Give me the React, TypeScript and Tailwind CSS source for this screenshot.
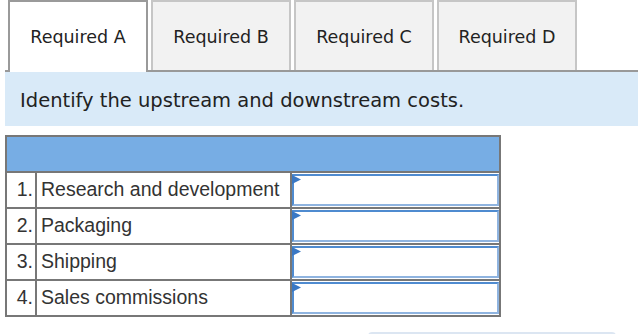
const tabs = ["Required A", "Required B", "Required C", "Required D"];

const rows = [
  "Research and development",
  "Packaging",
  "Shipping",
  "Sales commissions",
];

export default function App() {
  return (
    <div className="w-[638px] h-[334px] overflow-hidden bg-white text-[#333]">
      {/* Tabs */}
      <div className="pl-[5px]">
        <div className="flex gap-[3px] pl-[3px] border-b-2 border-[#999] h-[72px]">
          {tabs.map((t, i) =>
            i === 0 ? (
              <div
                key={t}
                className="w-[140px] h-[72px] border-2 border-b-0 border-[#9a9a9a] bg-white flex items-center justify-center font-['DejaVu_Sans',sans-serif] text-[17.5px] text-[#222] pt-[1px]"
              >
                {t}
              </div>
            ) : (
              <div
                key={t}
                className="w-[140px] h-[70px] border-2 border-b-0 border-[#c6c6c6] bg-[#f2f2f2] flex items-center justify-center font-['DejaVu_Sans',sans-serif] text-[17.5px] text-[#222] pt-[2px]"
              >
                {t}
              </div>
            )
          )}
        </div>

        {/* Instruction */}
        <div className="h-[54px] bg-[#d9eaf8] flex items-center pl-[15px] pt-[4px] font-['DejaVu_Sans',sans-serif] text-[19.5px] text-[#222]">
          Identify the upstream and downstream costs.
        </div>

        {/* Table */}
        <div className="mt-[9px] w-[496px] border-2 border-[#777] bg-[#777] flex flex-col gap-[2px]">
          <div className="h-[34px] bg-[#77ade4]" />
          {rows.map((r, i) => (
            <div key={r} className="flex gap-[2px] h-[34px]">
              <div className="w-[28px] bg-white flex items-center justify-end pr-[2px] font-['Liberation_Sans',sans-serif] text-[19.5px]">
                {i + 1}.
              </div>
              <div className="w-[253px] bg-white flex items-center pl-[4px] font-['Liberation_Sans',sans-serif] text-[19.5px]">
                {r}
              </div>
              <div className="flex-1 bg-white pt-[1px] pb-[1px]">
                <div className="relative h-full border-2 border-[#4f8bd0] border-b-[#8fb4e0] border-r-[#8fb4e0]">
                  <svg
                    className="absolute -left-[2px] -top-[1px]"
                    width="9"
                    height="10"
                    viewBox="0 0 9 10"
                  >
                    <path d="M0 0 L9 4.5 L0 9 Z" fill="#3a78c4" />
                  </svg>
                </div>
              </div>
            </div>
          ))}
        </div>
      </div>

      {/* Partially visible button below */}
      <div className="flex justify-end pr-[22px] mt-[15px]">
        <div className="w-[248px] h-[10px] rounded-t-[4px] bg-[#dce6f2]" />
      </div>
    </div>
  );
}
